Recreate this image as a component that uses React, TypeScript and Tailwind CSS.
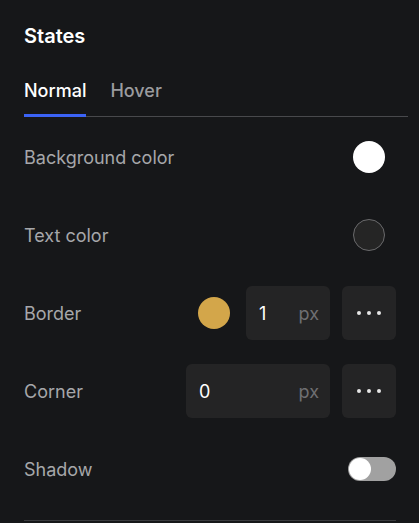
import React, { useState } from 'react';

function Dots() {
  return (
    <button className="w-[54px] h-[54px] rounded-md bg-[#242425] flex items-center justify-center gap-[6px]">
      <span className="w-[4px] h-[4px] rounded-full bg-[#e5e5e5]" />
      <span className="w-[4px] h-[4px] rounded-full bg-[#e5e5e5]" />
      <span className="w-[4px] h-[4px] rounded-full bg-[#e5e5e5]" />
    </button>
  );
}

function PxInput({ value, width }: { value: string; width: string }) {
  return (
    <div className={`${width} h-[54px] rounded-md bg-[#242425] flex items-center justify-between pl-[13px] pr-[11px]`}>
      <span className="text-[18px] text-white">{value}</span>
      <span className="text-[18px] text-[#6f6f72]">px</span>
    </div>
  );
}

function Row({ label, children }: { label: string; children: React.ReactNode }) {
  return (
    <div className="h-[54px] flex items-center justify-between">
      <span className="text-[18px] text-[#a6a7aa]">{label}</span>
      <div className="flex items-center gap-3">{children}</div>
    </div>
  );
}

export default function App() {
  const [tab, setTab] = useState('normal');
  const [shadow, setShadow] = useState(false);

  return (
    <div className="w-[419px] h-[523px] bg-[#161719] overflow-hidden pl-6 pr-[23px] pt-[22px]" style={{ fontFamily: 'Inter, "Noto Sans", sans-serif' }}>
      <h2 className="text-[20px] leading-[28px] font-semibold text-white">States</h2>

      {/* Tabs */}
      <div className="mt-[27px] -mr-3 flex gap-6 border-b border-[#48494c]">
        <button onClick={() => setTab('normal')} className={`relative pb-[11px] text-[18px] leading-[28px] font-medium ${tab === 'normal' ? 'text-white' : 'text-[#9b9c9f]'}`}>
          Normal
          {tab === 'normal' && <span className="absolute left-0 right-0 -bottom-[1px] h-[3px] bg-[#3b63f6]" />}
        </button>
        <button onClick={() => setTab('hover')} className={`relative pb-[11px] text-[18px] leading-[28px] font-medium ${tab === 'hover' ? 'text-white' : 'text-[#9b9c9f]'}`}>
          Hover
          {tab === 'hover' && <span className="absolute left-0 right-0 -bottom-[1px] h-[3px] bg-[#3b63f6]" />}
        </button>
      </div>

      <div className="mt-[13px] flex flex-col gap-6">
        <Row label="Background color">
          <span className="w-8 h-8 rounded-full bg-white mr-[11px]" />
        </Row>
        <Row label="Text color">
          <span className="w-8 h-8 rounded-full bg-[#252525] border border-[#6a6a6c] mr-[11px]" />
        </Row>
        <Row label="Border">
          <span className="w-8 h-8 rounded-full bg-[#d3a64a] mr-1" />
          <PxInput value="1" width="w-[84px]" />
          <Dots />
        </Row>
        <Row label="Corner">
          <PxInput value="0" width="w-[144px]" />
          <Dots />
        </Row>
        <Row label="Shadow">
          <button
            onClick={() => setShadow(!shadow)}
            className={`w-12 h-6 rounded-full p-[1px] flex items-center ${shadow ? 'bg-[#3b63f6] justify-end' : 'bg-[#a1a1a1] justify-start'}`}
          >
            <span className="w-[22px] h-[22px] rounded-full bg-white" />
          </button>
        </Row>
      </div>

      <div className="mt-6 border-t border-[#3a3b3e]" />
    </div>
  );
}
